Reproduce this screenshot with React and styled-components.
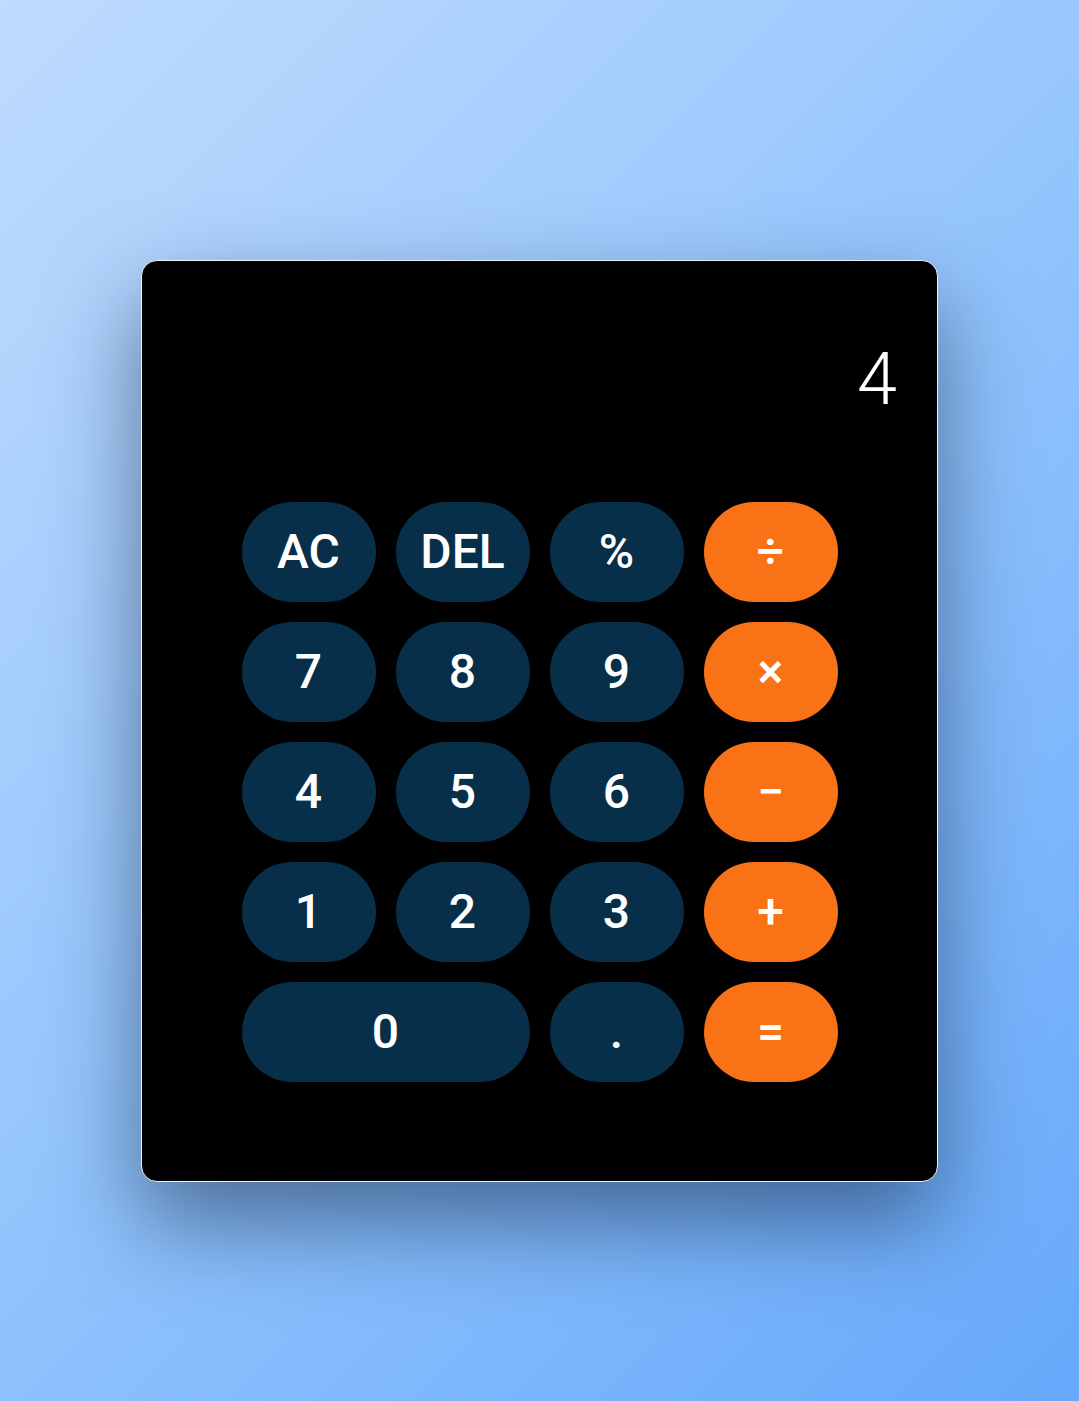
import React from "react";
import styled, { createGlobalStyle } from "styled-components";

const Global = createGlobalStyle`
  * { box-sizing: border-box; }
  html, body { margin: 0; padding: 0; }
  body {
    font-family: Roboto, "Liberation Sans", sans-serif;
    background: linear-gradient(135deg, #bfdbfe 0%, #93c5fd 50%, #66a8fa 100%);
    min-height: 100vh;
  }
`;

const Page = styled.main`
  min-height: 100vh;
  display: flex;
  justify-content: center;
  align-items: flex-start;
  padding-top: 260px;
`;

const Card = styled.section`
  width: 797px;
  height: 922px;
  background: #000;
  border: 1px solid #eef2f7;
  border-radius: 16px;
  box-shadow: 0 40px 90px rgba(10, 25, 50, 0.5);
  display: flex;
  flex-direction: column;
  padding: 83px 40px 0;
`;

const Display = styled.div`
  color: #fff;
  font-family: Roboto, "Liberation Sans", sans-serif;
  font-size: 72px;
  font-weight: 300;
  line-height: 72px;
  height: 72px;
  text-align: right;
  margin-bottom: 86px;
`;

const Keypad = styled.div`
  display: grid;
  grid-template-columns: repeat(4, 134px);
  grid-auto-rows: 100px;
  gap: 20px;
  justify-content: center;
`;

const Key = styled.button`
  border: none;
  outline: none;
  border-radius: 50px;
  background: ${(p) => (p.$op ? "#f97316" : "#082f49")};
  color: #fff;
  font-family: Roboto, "Liberation Sans", sans-serif;
  font-size: 48px;
  font-weight: 500;
  line-height: 1;
  display: flex;
  align-items: center;
  justify-content: center;
  grid-column: span ${(p) => p.$span || 1};
  cursor: pointer;
  padding: 0;
`;

const keys = [
  { l: "AC" }, { l: "DEL" }, { l: "%" }, { l: "÷", op: true },
  { l: "7" }, { l: "8" }, { l: "9" }, { l: "×", op: true },
  { l: "4" }, { l: "5" }, { l: "6" }, { l: "−", op: true },
  { l: "1" }, { l: "2" }, { l: "3" }, { l: "+", op: true },
  { l: "0", span: 2 }, { l: "." }, { l: "=", op: true },
];

export default function App() {
  return (
    <>
      <Global />
      <Page>
        <Card>
          <Display>4</Display>
          <Keypad>
            {keys.map((k) => (
              <Key key={k.l} $op={k.op} $span={k.span}>
                {k.l}
              </Key>
            ))}
          </Keypad>
        </Card>
      </Page>
    </>
  );
}
